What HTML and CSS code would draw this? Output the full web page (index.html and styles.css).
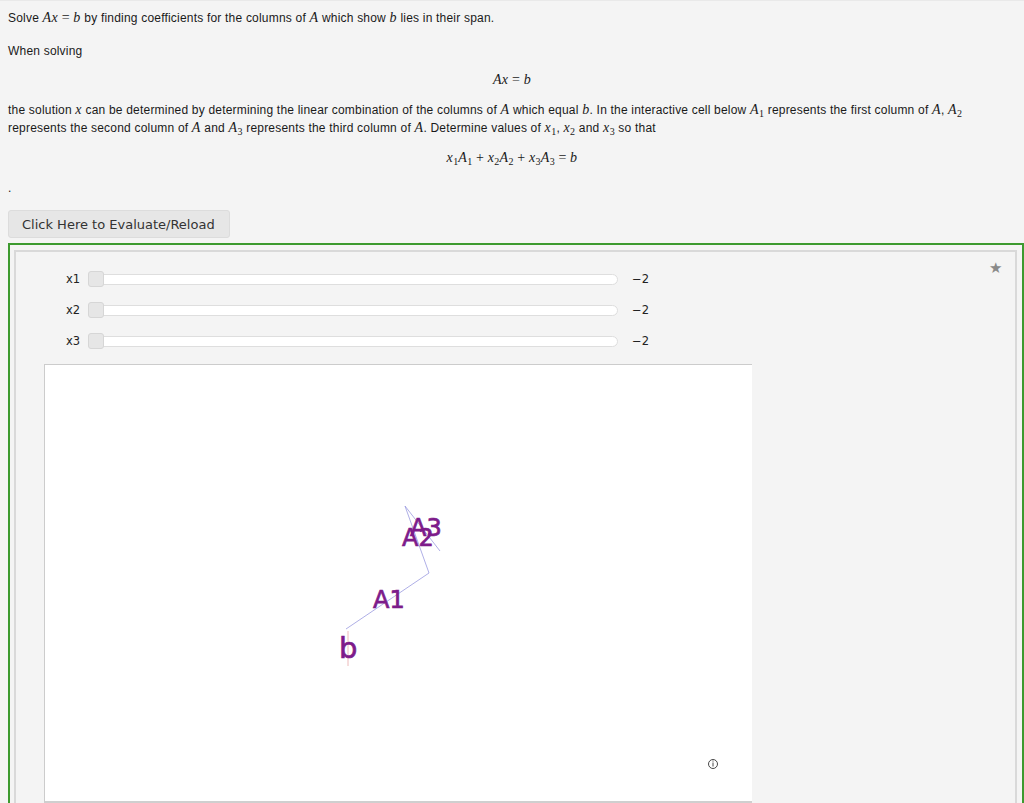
FILE: index.html
```html
<!DOCTYPE html>
<html>
<head>
<meta charset="utf-8">
<link rel="stylesheet" href="styles.css">
</head>
<body>
<div class="page">
  <p class="p1">Solve <span class="m">Ax</span> <span class="mo">=</span> <span class="m">b</span> by finding coefficients for the columns of <span class="m">A</span> which show <span class="m">b</span> lies in their span.</p>
  <p class="p2">When solving</p>
  <p class="disp d1"><span class="m">Ax</span> <span class="mo">=</span> <span class="m">b</span></p>
  <p class="p3">the solution <span class="m">x</span> can be determined by determining the linear combination of the columns of <span class="m">A</span> which equal <span class="m">b</span>. In the interactive cell below <span class="m">A</span><sub>1</sub> represents the first column of <span class="m">A</span>, <span class="m">A</span><sub>2</sub> represents the second column of <span class="m">A</span> and <span class="m">A</span><sub>3</sub> represents the third column of <span class="m">A</span>. Determine values of <span class="m">x</span><sub>1</sub>, <span class="m">x</span><sub>2</sub> and <span class="m">x</span><sub>3</sub> so that</p>
  <p class="disp d2"><span class="m">x</span><sub>1</sub><span class="m">A</span><sub>1</sub> <span class="mo">+</span> <span class="m">x</span><sub>2</sub><span class="m">A</span><sub>2</sub> <span class="mo">+</span> <span class="m">x</span><sub>3</sub><span class="m">A</span><sub>3</sub> <span class="mo">=</span> <span class="m">b</span></p>
  <p class="p4">.</p>
  <button class="btn">Click Here to Evaluate/Reload</button>
  <div class="cell">
    <div class="inner">
      <span class="star">★</span>
      <div class="sliders">
        <div class="row"><span class="lbl">x1</span><div class="slider"><div class="track"></div><div class="handle"></div></div><span class="val">−2</span></div>
        <div class="row"><span class="lbl">x2</span><div class="slider"><div class="track"></div><div class="handle"></div></div><span class="val">−2</span></div>
        <div class="row"><span class="lbl">x3</span><div class="slider"><div class="track"></div><div class="handle"></div></div><span class="val">−2</span></div>
      </div>
      <div class="plot">
        <svg width="707" height="436" viewBox="0 0 707 436">
          <polyline points="301,264 384,208 360,141 395,186" fill="none" stroke="#9a9ae0" stroke-width="0.8"/>
          <line x1="303" y1="266" x2="303" y2="301" stroke="#e8a8a8" stroke-width="0.8"/>
          <g fill="#7d1b8a" stroke="#7d1b8a" stroke-width="0.7" font-family="DejaVu Sans, sans-serif" font-size="24">
            <text x="294" y="293" font-size="29">b</text>
            <text x="328" y="243">A1</text>
            <text x="357" y="181">A2</text>
            <text x="365" y="171">A3</text>
          </g>
          <circle cx="668" cy="399" r="4.5" fill="none" stroke="#333" stroke-width="0.9"/>
          <line x1="668" y1="397.5" x2="668" y2="401.5" stroke="#333" stroke-width="0.9"/>
          <circle cx="668" cy="396" r="0.6" fill="#333"/>
        </svg>
      </div>
    </div>
  </div>
</div>
</body>
</html>
```
FILE: styles.css
```css
html, body {
  margin: 0;
  padding: 0;
  background: #f4f4f4;
}
body {
  border-top: 1px solid #e9e9e9;
  height: 802px;
  overflow: hidden;
  font-family: "Liberation Sans", Arial, sans-serif;
  font-size: 12px;
  letter-spacing: 0.2px;
  color: #1a1a1a;
}
.page {
  padding: 0 0 0 8px;
}
p {
  margin: 0;
  line-height: 18px;
}
.p1 { padding-top: 8px; }
.p2 { margin-top: 15px; }
.disp { text-align: center; padding-right: 8px; }
.d1 { margin-top: 11px; }
.p3 { margin-top: 12px; padding-right: 16px; }
.d2 { margin-top: 12px; }
.p4 { margin-top: 12px; }
.m {
  font-family: "Liberation Serif", "Times New Roman", serif;
  font-style: italic;
  font-size: 14px;
  letter-spacing: 0.4px;
}
.mo {
  font-family: "Liberation Serif", serif;
  font-size: 14px;
}
sub {
  font-family: "Liberation Serif", serif;
  font-size: 10px;
  line-height: 0;
  vertical-align: -3px;
}
.btn {
  display: block;
  margin-top: 13px;
  width: 222px;
  height: 28px;
  padding: 0 0 0 13px;
  text-align: left;
  background: #e6e6e6;
  border: 1px solid #dcdcdc;
  border-radius: 3px;
  font-family: "DejaVu Sans", Verdana, sans-serif;
  font-size: 13px;
  letter-spacing: 0;
  color: #333;
}
.cell {
  margin-top: 5px;
  border: 2px solid #3d9a2f;
  padding: 5px 5px 0 4px;
  height: 600px;
}
.inner {
  position: relative;
  border: 2px solid #d9d9d9;
  border-bottom: none;
  height: 600px;
  background: #f4f4f4;
}
.star {
  position: absolute;
  right: 13px;
  top: 7px;
  font-size: 15px;
  color: #8a8a8a;
}
.sliders {
  padding-top: 19px;
  display: flex;
  flex-direction: column;
  gap: 15px;
}
.row {
  display: flex;
  align-items: center;
  height: 16px;
}
.lbl {
  width: 64px;
  text-align: right;
  font-family: "DejaVu Sans", sans-serif;
  font-size: 11.5px;
  letter-spacing: 0;
  color: #222;
}
.slider {
  position: relative;
  margin-left: 8px;
  width: 530px;
  height: 16px;
}
.track {
  position: absolute;
  left: 2px;
  right: 0;
  top: 3px;
  height: 9px;
  background: #fff;
  border: 1px solid #dedede;
  border-radius: 0 6px 6px 0;
}
.handle {
  position: absolute;
  left: 0;
  top: 0;
  width: 14px;
  height: 14px;
  background: #e6e6e6;
  border: 1px solid #d6d6d6;
  border-radius: 3px;
}
.val {
  margin-left: 14px;
  font-family: "DejaVu Sans", sans-serif;
  font-size: 11.5px;
  letter-spacing: 0;
  color: #222;
}
.plot {
  margin: 15px 0 0 28px;
  width: 707px;
  height: 436px;
  background: #fff;
  border-top: 1px solid #cccccc;
  border-left: 1px solid #cccccc;
  border-bottom: 2px solid #cfcfcf;
}
.plot svg { display: block; }
```
